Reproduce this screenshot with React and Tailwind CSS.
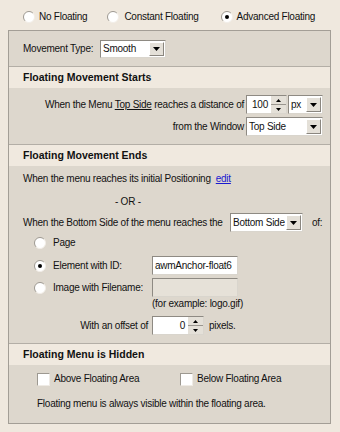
import React from "react";

function Radio({ checked }) {
  return (
    <svg width="12" height="12" viewBox="0 0 12 12" className="shrink-0">
      <circle cx="6" cy="6" r="5.5" fill="#ffffff" />
      <path d="M2.1 9.9 A5.5 5.5 0 0 1 9.9 2.1" fill="none" stroke="#9d9991" strokeWidth="1" />
      <path d="M9.9 2.1 A5.5 5.5 0 0 1 2.1 9.9" fill="none" stroke="#f2eee8" strokeWidth="1" />
      {checked && <circle cx="6" cy="6" r="2" fill="#000000" />}
    </svg>
  );
}

function Checkbox() {
  return (
    <span className="block w-[13px] h-[13px] shrink-0 bg-white border border-t-[#9d9991] border-l-[#9d9991] border-b-[#efebe5] border-r-[#efebe5]" />
  );
}

function DownArrow() {
  return (
    <svg width="7" height="4" viewBox="0 0 7 4">
      <path d="M0 0 H7 L3.5 4 Z" fill="#000" />
    </svg>
  );
}

function Select({ value, w }) {
  return (
    <div
      className={`flex h-full bg-white border border-t-[#8e8a83] border-l-[#8e8a83] border-b-[#d9d5cd] border-r-[#d9d5cd] ${w}`}
    >
      <div className="flex-1 flex items-center pl-[2px] overflow-hidden whitespace-nowrap">{value}</div>
      <div className="w-[15px] m-[1px] flex items-center justify-center bg-[#e4e0d8] border border-t-[#ffffff] border-l-[#ffffff] border-b-[#8a867f] border-r-[#8a867f]">
        <DownArrow />
      </div>
    </div>
  );
}

function Spin({ value, w }) {
  return (
    <div className="flex h-full">
      <div
        className={`flex items-center justify-end pr-[3px] bg-white border border-t-[#8e8a83] border-l-[#8e8a83] border-b-[#d9d5cd] border-r-0 ${w}`}
      >
        {value}
      </div>
      <div className="w-[16px] flex flex-col border border-t-[#8e8a83] border-l-0 border-b-[#d9d5cd] border-r-[#d9d5cd] bg-[#e4e0d8]">
        <div className="flex-1 flex items-center justify-center border-b border-b-[#9a968f]">
          <svg width="5" height="3" viewBox="0 0 5 3">
            <path d="M0 3 H5 L2.5 0 Z" fill="#000" />
          </svg>
        </div>
        <div className="flex-1 flex items-center justify-center">
          <svg width="5" height="3" viewBox="0 0 5 3">
            <path d="M0 0 H5 L2.5 3 Z" fill="#000" />
          </svg>
        </div>
      </div>
    </div>
  );
}

function Header({ children }) {
  return (
    <div className="h-[22px] border-t border-t-[#b3aea6] bg-[#f0e9df] flex items-center pl-[14px] font-bold text-[10.5px] tracking-normal">
      {children}
    </div>
  );
}

export default function App() {
  return (
    <div className="w-[340px] h-[432px] bg-[#efe8de] text-[#111] font-['Liberation_Sans',Arial,sans-serif] text-[10px] tracking-[-0.25px] leading-none overflow-hidden">
      {/* top radios */}
      <div className="h-[30px] pt-[4px] flex items-center">
        <div className="flex items-center ml-[23px]">
          <Radio />
          <span className="ml-[4px]">No Floating</span>
        </div>
        <div className="flex items-center ml-[20px]">
          <Radio />
          <span className="ml-[5px]">Constant Floating</span>
        </div>
        <div className="flex items-center ml-[22px]">
          <Radio checked />
          <span className="ml-[4px]">Advanced Floating</span>
        </div>
      </div>

      {/* panel */}
      <div className="ml-[8px] w-[323px] border border-[#a39e96] bg-[#ddd7cd]">
        <div className="h-[35px] flex items-center pl-[14px]">
          <span className="w-[77px]">Movement Type:</span>
          <div className="h-[18px]">
            <Select value="Smooth" w="w-[66px]" />
          </div>
        </div>

        <Header>Floating Movement Starts</Header>
        <div className="h-[56px] flex flex-col pr-[7px]">
          <div className="mt-[7px] h-[19px] flex items-center justify-end">
            <span className="mr-[2px]">
              When the Menu <span className="underline">Top Side</span> reaches a distance of
            </span>
            <Spin value="100" w="w-[25px]" />
            <div className="h-full ml-[1px]">
              <Select value="px" w="w-[35px]" />
            </div>
          </div>
          <div className="mt-[3px] h-[19px] flex items-center justify-end">
            <span className="mr-[2px]">from the Window</span>
            <div className="h-full">
              <Select value="Top Side" w="w-[77px]" />
            </div>
          </div>
        </div>

        <Header>Floating Movement Ends</Header>
        <div className="h-[177px] flex flex-col">
          <div className="mt-[4px] h-[18px] flex items-center pl-[14px]">
            <span>When the menu reaches its initial Positioning</span>
            <span className="ml-[5px] text-[#1a1ad0] underline">edit</span>
          </div>
          <div className="mt-[5px] h-[18px] flex items-center pl-[106px]">- OR -</div>
          <div className="mt-[2px] h-[19px] flex items-center pl-[14px]">
            <span className="w-[207px]">When the Bottom Side of the menu reaches the</span>
            <div className="h-full">
              <Select value="Bottom Side" w="w-[73px]" />
            </div>
            <span className="ml-[9px]">of:</span>
          </div>
          <div className="mt-[2px] h-[18px] flex items-center pl-[25px]">
            <Radio />
            <span className="ml-[7px]">Page</span>
          </div>
          <div className="mt-[4px] h-[19px] flex items-center pl-[25px]">
            <Radio checked />
            <span className="ml-[7px] w-[99px]">Element with ID:</span>
            <div className="h-full w-[86px] bg-white border border-t-[#8e8a83] border-l-[#8e8a83] border-b-[#d9d5cd] border-r-[#d9d5cd] flex items-center pl-[2px]">
              awmAnchor-float6
            </div>
          </div>
          <div className="mt-[3px] h-[19px] flex items-center pl-[25px]">
            <Radio />
            <span className="ml-[7px] w-[99px]">Image with Filename:</span>
            <div className="h-full w-[86px] bg-[#e6e1d8] border border-t-[#8e8a83] border-l-[#8e8a83] border-b-[#d9d5cd] border-r-[#d9d5cd]" />
          </div>
          <div className="h-[14px] flex items-center pl-[143px]">(for example: logo.gif)</div>
          <div className="mt-[5px] h-[19px] flex items-center">
            <span className="w-[139px] text-right">With an offset of</span>
            <div className="h-full ml-[4px]">
              <Spin value="0" w="w-[36px]" />
            </div>
            <span className="ml-[5px]">pixels.</span>
          </div>
        </div>

        <Header>Floating Menu is Hidden</Header>
        <div className="h-[58px] flex flex-col">
          <div className="mt-[7px] h-[14px] flex items-center pl-[28px]">
            <Checkbox />
            <span className="ml-[4px] w-[126px]">Above Floating Area</span>
            <Checkbox />
            <span className="ml-[4px]">Below Floating Area</span>
          </div>
          <div className="mt-[11px] h-[14px] flex items-center pl-[28px]">
            Floating menu is always visible within the floating area.
          </div>
        </div>
      </div>
    </div>
  );
}
